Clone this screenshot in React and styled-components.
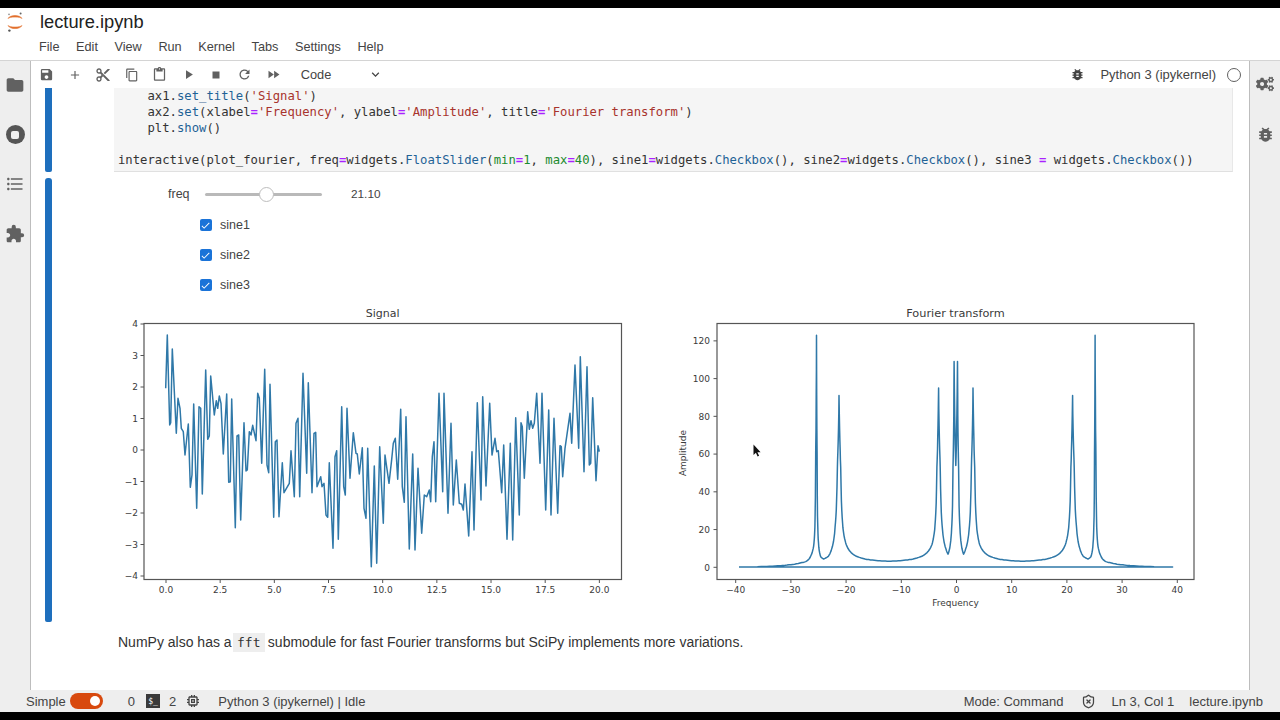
import React from "react";
import styled, { createGlobalStyle } from "styled-components";
import {
  MdSave,
  MdAdd,
  MdContentCut,
  MdContentCopy,
  MdContentPaste,
  MdPlayArrow,
  MdStop,
  MdRefresh,
  MdFastForward,
  MdKeyboardArrowDown,
  MdFolder,
  MdFormatListBulleted,
  MdExtension,
  MdBugReport,
  MdMemory,
  MdCheck,
} from "react-icons/md";
import { FaCogs } from "react-icons/fa";
import { ShieldX } from "lucide-react";

const UI_FONT = '"Liberation Sans", Arial, sans-serif';
const MONO_FONT = '"DejaVu Sans Mono", monospace';
const PLOT_FONT = '"DejaVu Sans", sans-serif';

const GlobalStyle = createGlobalStyle`
  html, body {
    margin: 0;
    padding: 0;
    background: #000;
    overflow: hidden;
  }
`;

const Shell = styled.div`
  width: 1280px;
  height: 720px;
  box-sizing: border-box;
  padding: 8px 0;
  background: #000;
  display: flex;
  flex-direction: column;
  font-family: ${UI_FONT};
  color: #333;
`;

const Header = styled.header`
  height: 52px;
  background: #fff;
  display: flex;
  flex-direction: column;
  flex: none;
`;

const TitleRow = styled.div`
  height: 27px;
  display: flex;
  align-items: center;
  padding-left: 6px;
`;

const Title = styled.div`
  margin-left: 16px;
  font-size: 18.3px;
  color: #222;
`;

const Menu = styled.nav`
  display: flex;
  gap: 16.6px;
  padding: 5px 0 0 39px;
  font-size: 12.7px;
  color: #444;
`;

const Body = styled.div`
  flex: 1;
  min-height: 0;
  display: flex;
  border-top: 1px solid #d4d4d4;
`;

const SideBar = styled.aside`
  width: ${(p) => p.$width}px;
  flex: none;
  box-sizing: border-box;
  background: #eeeeee;
  display: flex;
  flex-direction: column;
  align-items: center;
  padding-top: ${(p) => p.$top}px;
  gap: ${(p) => p.$gap}px;
  color: #616161;
  border-${(p) => p.$side}: 1px solid #bdbdbd;
`;

const StopDisc = styled.div`
  width: 19px;
  height: 19px;
  border-radius: 50%;
  background: #555;
  display: flex;
  align-items: center;
  justify-content: center;
  &::after {
    content: "";
    width: 8px;
    height: 8px;
    border-radius: 2px;
    background: #eee;
  }
`;

const Main = styled.main`
  flex: 1;
  min-width: 0;
  background: #fff;
  display: flex;
  flex-direction: column;
`;

const Toolbar = styled.div`
  height: 27px;
  flex: none;
  display: flex;
  align-items: center;
  padding: 0 8px 0 1.5px;
  color: #616161;
`;

const ToolButton = styled.div`
  width: 28.3px;
  display: flex;
  justify-content: center;
  align-items: center;
`;

const CellType = styled.div`
  width: 96px;
  padding-left: 13.5px;
  box-sizing: border-box;
  display: flex;
  align-items: center;
  justify-content: space-between;
  font-size: 12.8px;
  color: #444;
`;

const KernelArea = styled.div`
  margin-left: auto;
  display: flex;
  align-items: center;
  font-size: 13px;
  color: #444;
`;

const KernelName = styled.span`
  margin: 0 11px 0 15px;
`;

const KernelCircle = styled.span`
  width: 12px;
  height: 12px;
  border: 1px solid #616161;
  border-radius: 50%;
`;

const Notebook = styled.div`
  flex: 1;
  min-height: 0;
  overflow: hidden;
  display: flex;
  flex-direction: column;
  gap: 6px;
  padding-left: 14px;
`;

const Cell = styled.section`
  display: grid;
  grid-template-columns: 7px 1fr;
  column-gap: 62px;
  height: ${(p) => p.$height}px;
  flex: none;
`;

const Collapser = styled.div`
  background: #1e6fbd;
  border-radius: ${(p) => (p.$round ? "3px 3px 2px 2px" : "0 0 2px 2px")};
`;

const InputArea = styled.div`
  margin-right: 16px;
  background: #f5f5f5;
  border-bottom: 1px solid #e0e0e0;
  border-right: 1px solid #e8e8e8;
  padding-left: 4px;
`;

const Code = styled.pre`
  margin: 0;
  font-family: ${MONO_FONT};
  font-size: 12.24px;
  line-height: 16px;
  color: #333;
`;

const TOKEN_COLORS = {
  method: "#1f6296",
  string: "#a8332c",
  op: "#aa22ff",
  num: "#1c8a2e",
  builtin: "#1c8a2e",
};

const Tok = styled.span`
  color: ${(p) => TOKEN_COLORS[p.$kind]};
  font-weight: ${(p) => (p.$kind === "op" ? 700 : 400)};
`;

const Output = styled.div`
  display: flex;
  flex-direction: column;
  padding-left: 4px;
`;

const SliderRow = styled.div`
  height: 32px;
  display: flex;
  align-items: center;
  font-size: 12.5px;
  color: #444;
`;

const SliderLabel = styled.span`
  width: 87px;
  box-sizing: border-box;
  padding-left: 50px;
`;

const Track = styled.div`
  position: relative;
  width: 117px;
  height: 3px;
  background: #b9b9b9;
  border-radius: 2px;
`;

const Thumb = styled.div`
  position: absolute;
  left: 54px;
  top: -6px;
  width: 13px;
  height: 13px;
  border-radius: 50%;
  background: #fff;
  border: 1px solid #bdbdbd;
`;

const SliderValue = styled.span`
  margin-left: 29px;
  font-size: 11.8px;
`;

const CheckRow = styled.div`
  height: 30px;
  display: flex;
  align-items: center;
  padding-left: 81.5px;
  gap: 8px;
  font-size: 12.5px;
  color: #444;
`;

const CheckBox = styled.span`
  width: 12.5px;
  height: 12.5px;
  border-radius: 2px;
  background: #1a73d8;
  color: #fff;
  display: flex;
  align-items: center;
  justify-content: center;
`;

const Figures = styled.div`
  display: flex;
  gap: 34px;
  margin-top: 4px;
`;

const Plot = styled.svg`
  display: block;
  flex: none;
`;

const AxisBox = styled.rect`
  fill: #fff;
  stroke: #555;
  stroke-width: 1.2;
`;

const TickMark = styled.line`
  stroke: #555;
  stroke-width: 1;
`;

const PlotText = styled.text`
  font-family: ${PLOT_FONT};
  font-size: ${(p) => p.$size || 9}px;
  fill: #3a3a3a;
`;

const Curve = styled.path`
  fill: none;
  stroke: #2f78a8;
  stroke-width: 1.5;
  stroke-linejoin: round;
`;

const Markdown = styled.p`
  margin: 4px 0 0 73px;
  font-size: 14px;
  line-height: 20px;
  color: #333;
`;

const InlineCode = styled.code`
  font-family: ${MONO_FONT};
  font-size: 13px;
  background: #eeeeee;
  padding: 2px 4.5px;
  margin: 0 -1px 0 -3px;
`;

const StatusBar = styled.footer`
  height: 22px;
  flex: none;
  background: #eeeeee;
  display: flex;
  align-items: center;
  padding-left: 26px;
  font-size: 13px;
  color: #444;
`;

const Toggle = styled.span`
  width: 33px;
  height: 16px;
  margin-left: 4px;
  border-radius: 8px;
  background: #d8490e;
  display: flex;
  align-items: center;
  justify-content: flex-end;
  padding-right: 3px;
  box-sizing: border-box;
  &::after {
    content: "";
    width: 10px;
    height: 10px;
    border-radius: 50%;
    background: #fff;
  }
`;

const StatusItem = styled.span`
  margin-left: ${(p) => p.$left || 0}px;
  display: flex;
  align-items: center;
  white-space: nowrap;
`;

const TerminalIcon = styled.span`
  width: 14px;
  height: 14px;
  background: #3a3a3a;
  color: #fff;
  font-size: 8px;
  display: flex;
  align-items: flex-end;
  justify-content: center;
  line-height: 12px;
  font-family: ${MONO_FONT};
`;

const StatusRight = styled.div`
  margin-left: auto;
  display: flex;
  align-items: center;
  padding-right: 17px;
`;

// traced from the signal plot: x, y pairs in page pixels are derived from the crop coords
const SIGNAL_LEFT = [
  137, 265, 142, 105, 149, 375, 152, 368, 157, 147, 169, 400, 174, 295, 180, 325, 184, 385, 190, 395, 195, 465, 205, 372,
  211, 562, 216, 525, 221, 312, 230, 625, 237, 320, 242, 325, 247, 582, 257, 210, 263, 418, 268, 408, 272, 228, 283, 345,
  289, 302, 293, 325, 298, 288, 303, 310, 310, 462, 320, 282, 326, 547, 331, 545, 335, 297, 346, 683, 351, 408, 356, 405,
  362, 660, 372, 368, 378, 513, 382, 510, 388, 395, 393, 405, 398, 376, 408, 422, 413, 280, 418, 295, 425, 490, 434, 208,
  441, 495, 446, 518, 450, 253, 461, 652, 466, 425, 471, 420, 477, 650, 487, 488, 492, 578, 508, 550, 513, 452, 523, 590,
  528, 370, 534, 355, 539, 590, 549, 220, 560, 520, 565, 248, 576, 578, 582, 400, 587, 397, 591, 560, 602, 530, 606, 560,
  612, 550, 618, 645, 623, 652, 628, 488, 639, 745, 645, 470, 650, 452, 655, 718, 665, 320, 671, 560, 676, 585, 681, 325,
  690, 535, 700, 398, 708, 460, 712, 462, 718, 522, 727, 443, 732, 625, 738, 655, 743, 445, 754, 800, 763, 498, 770, 790,
];

const SIGNAL_RIGHT = [
  29, 440, 40, 670, 45, 465, 57, 550, 65, 478, 70, 430, 76, 415, 83, 538, 92, 328, 97, 560, 103, 607, 108, 350, 118, 747,
  128, 462, 135, 750, 144, 505, 155, 700, 163, 585, 170, 590, 178, 570, 182, 605, 187, 470, 192, 425, 197, 605, 207, 280,
  218, 575, 222, 280, 234, 640, 243, 370, 250, 615, 259, 480, 268, 610, 275, 613, 280, 630, 285, 552, 296, 708, 306, 455,
  312, 690, 322, 308, 333, 600, 338, 290, 348, 558, 359, 310, 366, 465, 375, 415, 380, 455, 385, 452, 395, 578, 401, 435,
  411, 718, 421, 430, 428, 720, 437, 353, 448, 645, 453, 368, 457, 380, 463, 535, 473, 335, 478, 388, 483, 362, 488, 385,
  493, 370, 500, 280, 510, 490, 516, 280, 527, 630, 536, 330, 543, 645, 552, 355, 563, 640, 570, 437, 574, 440, 578, 530,
  585, 445, 600, 340, 605, 430, 615, 195, 626, 445, 631, 170, 642, 515, 651, 200, 658, 495, 662, 490, 668, 293, 678, 542,
  684, 437, 688, 455,
];

const toSignalPath = () => {
  const pts = [];
  for (let i = 0; i < SIGNAL_LEFT.length; i += 2) {
    pts.push(`${(120 + SIGNAL_LEFT[i] / 3).toFixed(1)} ${(300 + SIGNAL_LEFT[i + 1] / 3).toFixed(1)}`);
  }
  for (let i = 0; i < SIGNAL_RIGHT.length; i += 2) {
    pts.push(`${(370 + SIGNAL_RIGHT[i] / 3).toFixed(1)} ${(300 + SIGNAL_RIGHT[i + 1] / 3).toFixed(1)}`);
  }
  return "M" + pts.join("L");
};

// frequency, amplitude for the positive half, the negative half mirrors it
const SPECTRUM = [
  [0, 54], [0.3, 109], [0.5, 53], [0.8, 18], [1.4, 7], [1.8, 10], [2.4, 20], [2.8, 53], [3.1, 95], [3.4, 53], [3.8, 20],
  [4.3, 12], [5, 8.3], [6, 6], [8, 4.2], [10, 3.5], [12, 3.2], [14, 3.5], [16, 4.2], [18, 6], [19, 8.3], [19.7, 12],
  [20.3, 21], [20.7, 53], [21, 91], [21.3, 53], [21.7, 21.5], [22.3, 10], [23, 5.6], [23.8, 4.4], [24.3, 5.6], [24.7, 13],
  [24.95, 60], [25.05, 123], [25.2, 60], [25.5, 13], [26, 6.5], [27, 3], [28, 2.3], [30, 1.3], [32, 0.8], [35, 0.4], [39, 0.1],
];

const fx = (f) => 955.8 + f * 5.56;
const fy = (a) => 567.3 - a * 1.887;

// tails of a peak fall off like 1/d, so interpolate 1/amp to get round feet
const denseSpectrum = () => {
  const out = [];
  SPECTRUM.forEach(([f, a], i) => {
    const next = SPECTRUM[i + 1];
    if (!next) {
      out.push([f, a]);
      return;
    }
    for (let s = 0; s < 6; s++) {
      const t = s / 6;
      out.push([f + (next[0] - f) * t, 1 / (1 / a + (1 / next[1] - 1 / a) * t)]);
    }
  });
  return out;
};

const toSpectrumPath = () => {
  const dense = denseSpectrum();
  const right = dense.map(([f, a]) => `${fx(f).toFixed(1)} ${fy(a).toFixed(1)}`);
  const left = dense.slice(1).reverse().map(([f, a]) => `${fx(-f).toFixed(1)} ${fy(a).toFixed(1)}`);
  return "M" + [...left, ...right].join("L") + `L${fx(-39).toFixed(1)} ${fy(0.1).toFixed(1)}`;
};

const SIGNAL_X = ["0.0", "2.5", "5.0", "7.5", "10.0", "12.5", "15.0", "17.5", "20.0"];
const SIGNAL_Y = ["4", "3", "2", "1", "0", "\u22121", "\u22122", "\u22123", "\u22124"];
const FOURIER_X = ["\u221240", "\u221230", "\u221220", "\u221210", "0", "10", "20", "30", "40"];
const FOURIER_Y = ["0", "20", "40", "60", "80", "100", "120"];

const SignalPlot = () => (
  <Plot width="520" height="300" viewBox="118 304 520 300">
    <AxisBox x="144" y="323.5" width="477.5" height="256" />
    <PlotText x="382.7" y="317" textAnchor="middle" $size={11}>Signal</PlotText>
    {SIGNAL_X.map((label, i) => {
      const x = 166 + i * 54.17;
      return (
        <g key={label}>
          <TickMark x1={x} x2={x} y1="579.5" y2="583" />
          <PlotText x={x} y="593" textAnchor="middle">{label}</PlotText>
        </g>
      );
    })}
    {SIGNAL_Y.map((label, i) => {
      const y = 324 + i * 31.5;
      return (
        <g key={label}>
          <TickMark x1="140.5" x2="144" y1={y} y2={y} />
          <PlotText x="138" y={y + 3.3} textAnchor="end">{label}</PlotText>
        </g>
      );
    })}
    <Curve d={toSignalPath()} />
  </Plot>
);

const FourierPlot = () => (
  <Plot width="530" height="310" viewBox="672 304 530 310">
    <AxisBox x="717" y="323.5" width="477" height="256" />
    <PlotText x="955.5" y="317" textAnchor="middle" $size={11.3}>Fourier transform</PlotText>
    {FOURIER_X.map((label, i) => {
      const x = 735.7 + i * 55.2;
      return (
        <g key={label}>
          <TickMark x1={x} x2={x} y1="579.5" y2="583" />
          <PlotText x={x} y="593" textAnchor="middle">{label}</PlotText>
        </g>
      );
    })}
    {FOURIER_Y.map((label, i) => {
      const y = 567.3 - i * 37.74;
      return (
        <g key={label}>
          <TickMark x1="713.5" x2="717" y1={y} y2={y} />
          <PlotText x="710" y={y + 3.3} textAnchor="end">{label}</PlotText>
        </g>
      );
    })}
    <PlotText x="955.5" y="606" textAnchor="middle">Frequency</PlotText>
    <PlotText x="686" y="453" textAnchor="middle" transform="rotate(-90 686 453)">Amplitude</PlotText>
    <Curve d={toSpectrumPath()} />
    {/* mouse pointer */}
    <path d="M753.5 444.5v10.5l2.4-2.2 1.7 3.6 1.5-.7-1.7-3.5h3.2z" fill="#111" />
  </Plot>
);

const JupyterLogo = () => (
  <svg width="18" height="22" viewBox="0 0 18 22">
    <path d="M2 7.5C4 3.6 14 3.6 16 7.5 14 5.6 4 5.6 2 7.5z" fill="#e2702e" stroke="#e2702e" strokeWidth=".6" />
    <path d="M2 14.5C4 18.6 14 18.6 16 14.5 14 16.6 4 16.6 2 14.5z" fill="#e2702e" stroke="#e2702e" strokeWidth=".6" />
    <circle cx="14.6" cy="2.6" r="1" fill="#666" />
    <circle cx="3" cy="3.4" r=".8" fill="#888" />
    <circle cx="3.4" cy="19.6" r="1.2" fill="#555" />
  </svg>
);

const App = () => {
  const tools = [
    <MdSave size={15} />,
    <MdAdd size={14} />,
    <MdContentCut size={16} />,
    <MdContentCopy size={14} />,
    <MdContentPaste size={15} />,
    <MdPlayArrow size={15} />,
    <MdStop size={14} />,
    <MdRefresh size={15} />,
    <MdFastForward size={15} />,
  ];

  return (
    <Shell>
      <GlobalStyle />
      <Header>
        <TitleRow>
          <JupyterLogo />
          <Title>lecture.ipynb</Title>
        </TitleRow>
        <Menu>
          {["File", "Edit", "View", "Run", "Kernel", "Tabs", "Settings", "Help"].map((item) => (
            <span key={item}>{item}</span>
          ))}
        </Menu>
      </Header>
      <Body>
        <SideBar $width={31} $side="right" $top={14} $gap={30}>
          <MdFolder size={20} />
          <StopDisc />
          <MdFormatListBulleted size={20} />
          <MdExtension size={20} />
        </SideBar>
        <Main>
          <Toolbar>
            {tools.map((icon, i) => (
              <ToolButton key={i}>{icon}</ToolButton>
            ))}
            <CellType>
              Code
              <MdKeyboardArrowDown size={15} />
            </CellType>
            <KernelArea>
              <MdBugReport size={15} />
              <KernelName>Python 3 (ipykernel)</KernelName>
              <KernelCircle />
            </KernelArea>
          </Toolbar>
          <Notebook>
            <Cell $height={84}>
              <Collapser />
              <InputArea>
                <Code>
                  {"    ax1."}<Tok $kind="method">set_title</Tok>{"("}<Tok $kind="string">'Signal'</Tok>{")\n"}
                  {"    ax2."}<Tok $kind="method">set</Tok>{"(xlabel"}<Tok $kind="op">=</Tok><Tok $kind="string">'Frequency'</Tok>{", ylabel"}<Tok $kind="op">=</Tok><Tok $kind="string">'Amplitude'</Tok>{", title"}<Tok $kind="op">=</Tok><Tok $kind="string">'Fourier transform'</Tok>{")\n"}
                  {"    plt."}<Tok $kind="method">show</Tok>{"()\n\n"}
                  {"interactive(plot_fourier, freq"}<Tok $kind="op">=</Tok>{"widgets."}<Tok $kind="method">FloatSlider</Tok>{"("}<Tok $kind="builtin">min</Tok><Tok $kind="op">=</Tok><Tok $kind="num">1</Tok>{", "}<Tok $kind="builtin">max</Tok><Tok $kind="op">=</Tok><Tok $kind="num">40</Tok>{"), sine1"}<Tok $kind="op">=</Tok>{"widgets."}<Tok $kind="method">Checkbox</Tok>{"(), sine2"}<Tok $kind="op">=</Tok>{"widgets."}<Tok $kind="method">Checkbox</Tok>{"(), sine3 "}<Tok $kind="op">=</Tok>{" widgets."}<Tok $kind="method">Checkbox</Tok>{"())"}
                </Code>
              </InputArea>
            </Cell>
            <Cell $height={444}>
              <Collapser $round />
              <Output>
                <SliderRow>
                  <SliderLabel>freq</SliderLabel>
                  <Track>
                    <Thumb />
                  </Track>
                  <SliderValue>21.10</SliderValue>
                </SliderRow>
                {["sine1", "sine2", "sine3"].map((name) => (
                  <CheckRow key={name}>
                    <CheckBox>
                      <MdCheck size={11} />
                    </CheckBox>
                    {name}
                  </CheckRow>
                ))}
                <Figures>
                  <SignalPlot />
                  <FourierPlot />
                </Figures>
              </Output>
            </Cell>
            <Markdown>
              NumPy also has a <InlineCode>fft</InlineCode> submodule for fast Fourier transforms but SciPy implements more variations.
            </Markdown>
          </Notebook>
        </Main>
        <SideBar $width={31} $side="left" $top={14} $gap={32}>
          <FaCogs size={18} />
          <MdBugReport size={19} />
        </SideBar>
      </Body>
      <StatusBar>
        <StatusItem>Simple</StatusItem>
        <Toggle />
        <StatusItem $left={25}>0</StatusItem>
        <StatusItem $left={11}>
          <TerminalIcon>$_</TerminalIcon>
        </StatusItem>
        <StatusItem $left={9}>2</StatusItem>
        <StatusItem $left={9}>
          <MdMemory size={16} />
        </StatusItem>
        <StatusItem $left={17}>Python 3 (ipykernel) | Idle</StatusItem>
        <StatusRight>
          <StatusItem>Mode: Command</StatusItem>
          <StatusItem $left={18}>
            <ShieldX size={15} />
          </StatusItem>
          <StatusItem $left={15}>Ln 3, Col 1</StatusItem>
          <StatusItem $left={15}>lecture.ipynb</StatusItem>
        </StatusRight>
      </StatusBar>
    </Shell>
  );
};

export default App;
